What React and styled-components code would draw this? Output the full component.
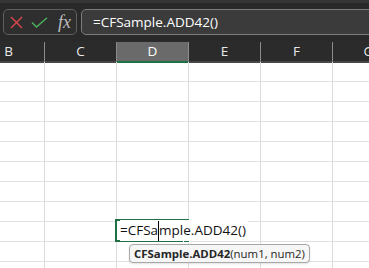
import React from "react";
import styled, { createGlobalStyle } from "styled-components";

const GlobalStyle = createGlobalStyle`
  html, body {
    margin: 0;
    padding: 0;
    background: #ffffff;
    overflow: hidden;
  }
  body {
    font-family: "Open Sans", "Liberation Sans", sans-serif;
  }
`;

const COLS = ["B", "C", "D", "E", "F", "G"];
const ROWS = 11;
const EDIT_ROW = 8;
const EDIT_COL = "D";

const Page = styled.div`
  width: 369px;
  height: 268px;
  overflow: hidden;
  display: flex;
  flex-direction: column;
`;

const TopBar = styled.div`
  height: 41px;
  box-sizing: border-box;
  background: #292929;
  border-top: 3px solid #363636;
  padding: 6px 0 6px 3px;
  display: flex;
  gap: 4px;
  margin-right: -20px;
`;

const ButtonGroup = styled.div`
  width: 74px;
  height: 26px;
  box-sizing: border-box;
  border: 1px solid #5f5f5f;
  border-radius: 5px;
  background: #2e2e2e;
  display: flex;
  align-items: center;
  padding-left: 6px;
  gap: 8px;
`;

const Fx = styled.span`
  font-family: "Liberation Serif", "DejaVu Serif", serif;
  font-style: italic;
  font-size: 18px;
  color: #bdbdbd;
  margin-left: 2px;
  line-height: 1;
`;

const FormulaBox = styled.div`
  flex: 1;
  height: 26px;
  box-sizing: border-box;
  border: 1px solid #7c7c7c;
  border-radius: 5px;
  background: #3b3b3b;
  color: #ffffff;
  font-size: 13.5px;
  display: flex;
  align-items: center;
  padding-left: 11px;
`;

const Grid = styled.div`
  margin-left: -27px;
  display: flex;
  flex-direction: column;
`;

const HeaderRow = styled.div`
  display: grid;
  grid-template-columns: repeat(${COLS.length}, 72px);
  height: 20px;
  background: #2b2b2b;
  border-top: 1px solid #2b2b2b;
`;

const HeaderCell = styled.div`
  box-sizing: border-box;
  display: flex;
  align-items: center;
  justify-content: center;
  font-size: 13.5px;
  color: ${(p) => (p.$active ? "#ffffff" : "#e8e8e8")};
  background: ${(p) => (p.$active ? "#6a6a6a" : "transparent")};
  border-right: 1px solid ${(p) => (p.$active ? "#8e8e8e" : "#8a8a8a")};
  border-bottom: 2px solid ${(p) => (p.$active ? "#1f7145" : "#474747")};
  padding-bottom: 1px;
`;

const Row = styled.div`
  display: grid;
  grid-template-columns: repeat(${COLS.length}, 72px);
  height: 20px;
`;

const Cell = styled.div`
  position: relative;
  box-sizing: border-box;
  border-right: 1px solid #dcdcdc;
  border-bottom: 1px solid #e1e1e1;
  z-index: ${(p) => (p.$editing ? 2 : 0)};
`;

const Editor = styled.div`
  position: absolute;
  left: -2px;
  top: -3px;
  width: 74px;
  height: 23px;
  box-sizing: border-box;
  border: 2px solid #1f7145;
  background: #ffffff;
`;

const Handle = styled.div`
  position: absolute;
  right: -3px;
  bottom: -3px;
  width: 5px;
  height: 5px;
  background: #1f7145;
  border: 1px solid #ffffff;
`;

const EditText = styled.div`
  position: absolute;
  left: 3px;
  top: -2px;
  white-space: nowrap;
  font-size: 13.5px;
  color: #111111;
  line-height: 20px;
  background: #ffffff;
  padding-right: 2px;
`;

const Caret = styled.span`
  display: inline-block;
  width: 1px;
  height: 20px;
  background: #000000;
  vertical-align: top;
  margin-top: 1px;
`;

const Tip = styled.div`
  position: absolute;
  left: 12px;
  top: 22px;
  white-space: nowrap;
  box-sizing: border-box;
  height: 19px;
  padding: 0 4px;
  display: flex;
  align-items: center;
  border: 1px solid #a8a8a8;
  border-radius: 4px;
  background: #f6f6f6;
  color: #262626;
  font-size: 11.4px;
  box-shadow: 0 1px 2px rgba(0, 0, 0, 0.12);
`;

const Bold = styled.b`
  font-weight: 700;
`;

const CancelIcon = () => (
  <svg width="13" height="13" viewBox="0 0 13 13">
    <path d="M1 1 L12 12 M12 1 L1 12" stroke="#e5484d" strokeWidth="1.3" fill="none" />
  </svg>
);

const CheckIcon = () => (
  <svg width="17" height="11" viewBox="0 0 17 11">
    <path d="M1 5.5 L5.5 10 L16 0.8" stroke="#4cb35a" strokeWidth="1.4" fill="none" />
  </svg>
);

export default function App() {
  const text = "=CFSample.ADD42()";
  return (
    <>
      <GlobalStyle />
      <Page>
        <TopBar>
          <ButtonGroup>
            <CancelIcon />
            <CheckIcon />
            <Fx>fx</Fx>
          </ButtonGroup>
          <FormulaBox>{text}</FormulaBox>
        </TopBar>
        <Grid>
          <HeaderRow>
            {COLS.map((c) => (
              <HeaderCell key={c} $active={c === EDIT_COL}>
                {c}
              </HeaderCell>
            ))}
          </HeaderRow>
          {Array.from({ length: ROWS }).map((_, r) => (
            <Row key={r}>
              {COLS.map((c) => {
                const editing = r === EDIT_ROW && c === EDIT_COL;
                return (
                  <Cell key={c} $editing={editing}>
                    {editing && (
                      <>
                        <Editor>
                          <Handle />
                        </Editor>
                        <EditText>
                          =CFSa
                          <Caret />
                          mple.ADD42()
                        </EditText>
                        <Tip>
                          <Bold>CFSample.ADD42</Bold>(num1, num2)
                        </Tip>
                      </>
                    )}
                  </Cell>
                );
              })}
            </Row>
          ))}
        </Grid>
      </Page>
    </>
  );
}
